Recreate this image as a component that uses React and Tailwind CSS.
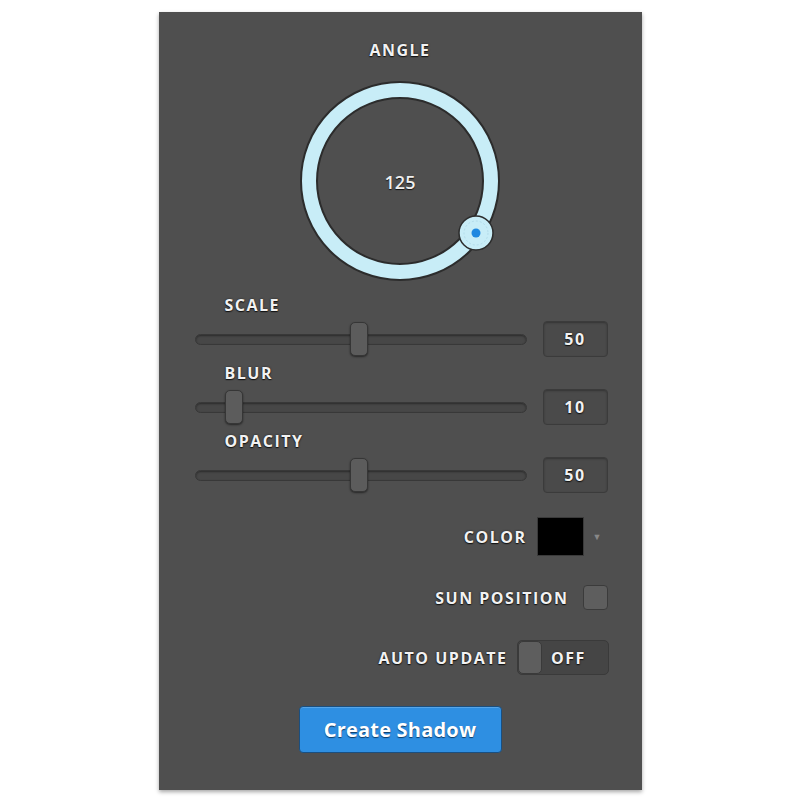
import React from "react";

const font = { fontFamily: '"Open Sans", "Liberation Sans", sans-serif' };

function Label({ children, className = "" }) {
  return (
    <span
      className={`font-bold text-[16px] tracking-[1.5px] text-[#f2f2f2] [text-shadow:0_1px_1px_#111,0_0_2px_#222] ${className}`}
    >
      {children}
    </span>
  );
}

function Slider({ label, value, thumbLeft }) {
  return (
    <div className="flex flex-col">
      <div className="h-[20px] flex items-center pl-[30px]">
        <Label>{label}</Label>
      </div>
      <div className="flex items-center h-[36px] mt-[6px]">
        <div className="relative flex-1 h-[11px] rounded-full bg-[#474747] border border-[#383838] shadow-[inset_0_1px_2px_rgba(0,0,0,0.4)]">
          <div
            className={`absolute top-1/2 -translate-y-1/2 w-[18px] h-[34px] rounded-[5px] bg-[#5c5c5c] border border-[#363636] shadow-[0_1px_2px_rgba(0,0,0,0.5)] ${thumbLeft}`}
          />
        </div>
        <div className="ml-[16px] w-[65px] h-[36px] rounded-[4px] bg-[#4a4a4a] border border-[#3b3b3b] shadow-[inset_0_1px_2px_rgba(0,0,0,0.3)] flex items-center justify-center">
          <Label className="text-[15px] tracking-[0px]">{value}</Label>
        </div>
      </div>
    </div>
  );
}

export default function App() {
  return (
    <div className="w-[800px] h-[800px] bg-white flex justify-center pt-[12px]" style={font}>
      <div className="w-[483px] h-[778px] bg-[#4f4f4f] shadow-[0_2px_4px_rgba(0,0,0,0.35)] flex flex-col items-stretch">
        <div className="h-[20px] mt-[28px] flex items-center justify-center">
          <Label>ANGLE</Label>
        </div>
        <div className="flex justify-center mt-[20px]">
          <svg width="202" height="202" viewBox="-1 -1 202 202">
            <circle cx="100" cy="100" r="91" fill="none" stroke="#2c2c2c" strokeWidth="18" />
            <circle cx="100" cy="100" r="91" fill="none" stroke="#c8edf7" strokeWidth="14" />
            <circle cx="176" cy="152" r="17" fill="#c8edf7" stroke="#2c2c2c" strokeWidth="1.5" />
            <circle cx="176" cy="152" r="12" fill="none" stroke="#b3dcea" strokeWidth="1" strokeDasharray="2 2" />
            <circle cx="176" cy="152" r="4.5" fill="#1f88e0" />
            <text
              x="100"
              y="108"
              textAnchor="middle"
              fontSize="18"
              fontWeight="600"
              fill="#f0f0f0"
              fontFamily='"Open Sans", "Liberation Sans", sans-serif'
              style={{ textShadow: "0 1px 1px #111" }}
            >
              125
            </text>
          </svg>
        </div>
        <div className="flex flex-col pl-[36px] pr-[34px] mt-[13px] gap-[6px]">
          <Slider label="SCALE" value="50" thumbLeft="left-[154px]" />
          <Slider label="BLUR" value="10" thumbLeft="left-[29px]" />
          <Slider label="OPACITY" value="50" thumbLeft="left-[154px]" />
        </div>
        <div className="flex items-center justify-end pr-[40px] mt-[24px] h-[39px]">
          <Label>COLOR</Label>
          <div className="ml-[10px] w-[47px] h-[39px] bg-black border border-[#3a3a3a]" />
          <span className="ml-[9px] text-[9px] text-[#888]">▼</span>
        </div>
        <div className="flex items-center justify-end pr-[34px] mt-[29px] h-[25px]">
          <Label>SUN POSITION</Label>
          <div className="ml-[14px] w-[25px] h-[25px] rounded-[4px] bg-[#5e5e5e] border border-[#3b3b3b]" />
        </div>
        <div className="flex items-center justify-end pr-[33px] mt-[30px] h-[35px]">
          <Label>AUTO UPDATE</Label>
          <div className="ml-[9px] w-[92px] h-[35px] rounded-[5px] bg-[#454545] border border-[#3a3a3a] flex items-center">
            <div className="w-[24px] h-full rounded-[5px] bg-[#5e5e5e] border border-[#3a3a3a]" />
            <div className="flex-1 flex justify-center pr-[12px]">
              <Label className="text-[15px] tracking-[-0.5px]">OFF</Label>
            </div>
          </div>
        </div>
        <div className="flex justify-center mt-[31px]">
          <button className="w-[203px] h-[47px] rounded-[4px] bg-[#2e8fe2] border border-[#1a4f80] text-white font-bold text-[20px] tracking-[0.2px] [text-shadow:0_1px_1px_#0d3a66] shadow-[inset_0_1px_0_rgba(255,255,255,0.2)]">
            Create Shadow
          </button>
        </div>
      </div>
    </div>
  );
}
